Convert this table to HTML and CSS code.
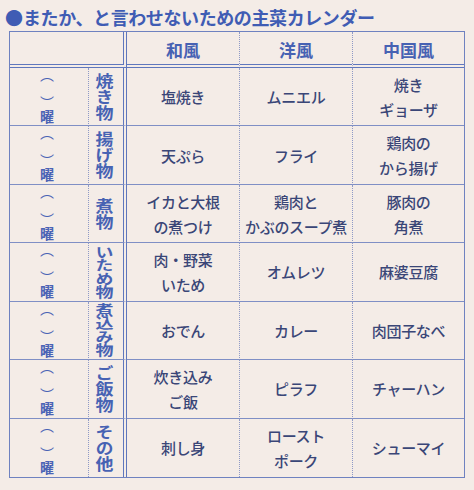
FILE: index.html
```html
<!DOCTYPE html>
<html lang="ja">
<head>
<meta charset="utf-8">
<title>主菜カレンダー</title>
<link rel="stylesheet" href="styles.css">
</head>
<body>
<div class="page">
  <h1 class="title"><span class="dot">●</span>またか、と言わせないための主菜カレンダー</h1>
  <div class="grid">
    <div class="hd hd-left"></div>
    <div class="hd dotr">和風</div>
    <div class="hd dotr">洋風</div>
    <div class="hd">中国風</div>

    <div class="day"><span class="dt">（　）<b>曜</b></span></div>
    <div class="cat"><span class="lbl">焼き物</span></div>
    <div class="dish dotr">塩焼き</div>
    <div class="dish dotr">ムニエル</div>
    <div class="dish">焼き<br>ギョーザ</div>

    <div class="day"><span class="dt">（　）<b>曜</b></span></div>
    <div class="cat"><span class="lbl">揚げ物</span></div>
    <div class="dish dotr">天ぷら</div>
    <div class="dish dotr">フライ</div>
    <div class="dish">鶏肉の<br>から揚げ</div>

    <div class="day"><span class="dt">（　）<b>曜</b></span></div>
    <div class="cat"><span class="lbl">煮物</span></div>
    <div class="dish dotr">イカと大根<br>の煮つけ</div>
    <div class="dish dotr">鶏肉と<br>かぶのスープ煮</div>
    <div class="dish">豚肉の<br>角煮</div>

    <div class="day"><span class="dt">（　）<b>曜</b></span></div>
    <div class="cat"><span class="lbl squeeze">いため物</span></div>
    <div class="dish dotr">肉・野菜<br>いため</div>
    <div class="dish dotr">オムレツ</div>
    <div class="dish">麻婆豆腐</div>

    <div class="day"><span class="dt">（　）<b>曜</b></span></div>
    <div class="cat"><span class="lbl squeeze">煮込み物</span></div>
    <div class="dish dotr">おでん</div>
    <div class="dish dotr">カレー</div>
    <div class="dish">肉団子なべ</div>

    <div class="day"><span class="dt">（　）<b>曜</b></span></div>
    <div class="cat"><span class="lbl">ご飯物</span></div>
    <div class="dish dotr">炊き込み<br>ご飯</div>
    <div class="dish dotr">ピラフ</div>
    <div class="dish">チャーハン</div>

    <div class="day last"><span class="dt">（　）<b>曜</b></span></div>
    <div class="cat last"><span class="lbl">その他</span></div>
    <div class="dish dotr last">刺し身</div>
    <div class="dish dotr last">ロースト<br>ポーク</div>
    <div class="dish last">シューマイ</div>
  </div>
</div>
</body>
</html>
```

FILE: styles.css
```css
html, body {
  margin: 0;
  padding: 0;
  background: #f4ece7;
}

body {
  font-family: "Noto Sans CJK JP", "Noto Sans", sans-serif;
  color: #3e4b7e;
}

.page {
  width: 474px;
  height: 490px;
  background: #f4ece7;
}

.title {
  margin: 0;
  padding: 7px 0 0 5px;
  height: 24px;
  font-size: 18px;
  line-height: 20px;
  font-weight: 700;
  letter-spacing: -0.4px;
  color: #3f5cb4;
  white-space: nowrap;
}

.dot {
  letter-spacing: 0;
}

.grid {
  margin-left: 9px;
  width: 456px;
  box-sizing: border-box;
  border: 1px solid #6f82c0;
  display: grid;
  grid-template-columns: 79px 38px 113px 113px 1fr;
  grid-template-rows: 36px repeat(7, 58.43px);
}

.hd {
  box-sizing: border-box;
  border-bottom: 4px double #5f77bd;
  display: flex;
  align-items: center;
  justify-content: center;
  font-size: 17px;
  font-weight: 700;
  color: #4762b3;
  padding-top: 2px;
}

.hd-left {
  grid-column: span 2;
  border-right: 4px double #5f77bd;
}

.dotr {
  border-right: 1px dotted #8e99c6;
}

.day, .cat, .dish {
  box-sizing: border-box;
  border-bottom: 1px solid #7f8fc5;
}

.last {
  border-bottom: none;
}

.day {
  border-right: 1px dotted #8e99c6;
  display: flex;
  justify-content: center;
  align-items: flex-start;
  padding: 0 4px 0 0;
}

.dt {
  display: block;
  writing-mode: vertical-rl;
  text-orientation: upright;
  white-space: nowrap;
  height: max-content;
  font-size: 14px;
  line-height: 14px;
  font-weight: 400;
  color: #4a63b5;
}

.dt b {
  font-weight: 700;
}

.cat {
  border-right: 4px double #5f77bd;
  display: flex;
  align-items: center;
  justify-content: center;
  padding-right: 3px;
}

.lbl {
  display: block;
  writing-mode: vertical-rl;
  text-orientation: upright;
  white-space: nowrap;
  height: max-content;
  font-size: 18px;
  line-height: 18px;
  font-weight: 700;
  color: #4762b3;
  transform: scaleY(0.88);
}

.lbl.squeeze {
  transform: scaleY(0.73);
}

.dish {
  display: flex;
  align-items: center;
  justify-content: center;
  text-align: center;
  font-size: 15px;
  line-height: 25px;
  font-weight: 500;
  letter-spacing: -0.3px;
  color: #3a4677;
}
```
